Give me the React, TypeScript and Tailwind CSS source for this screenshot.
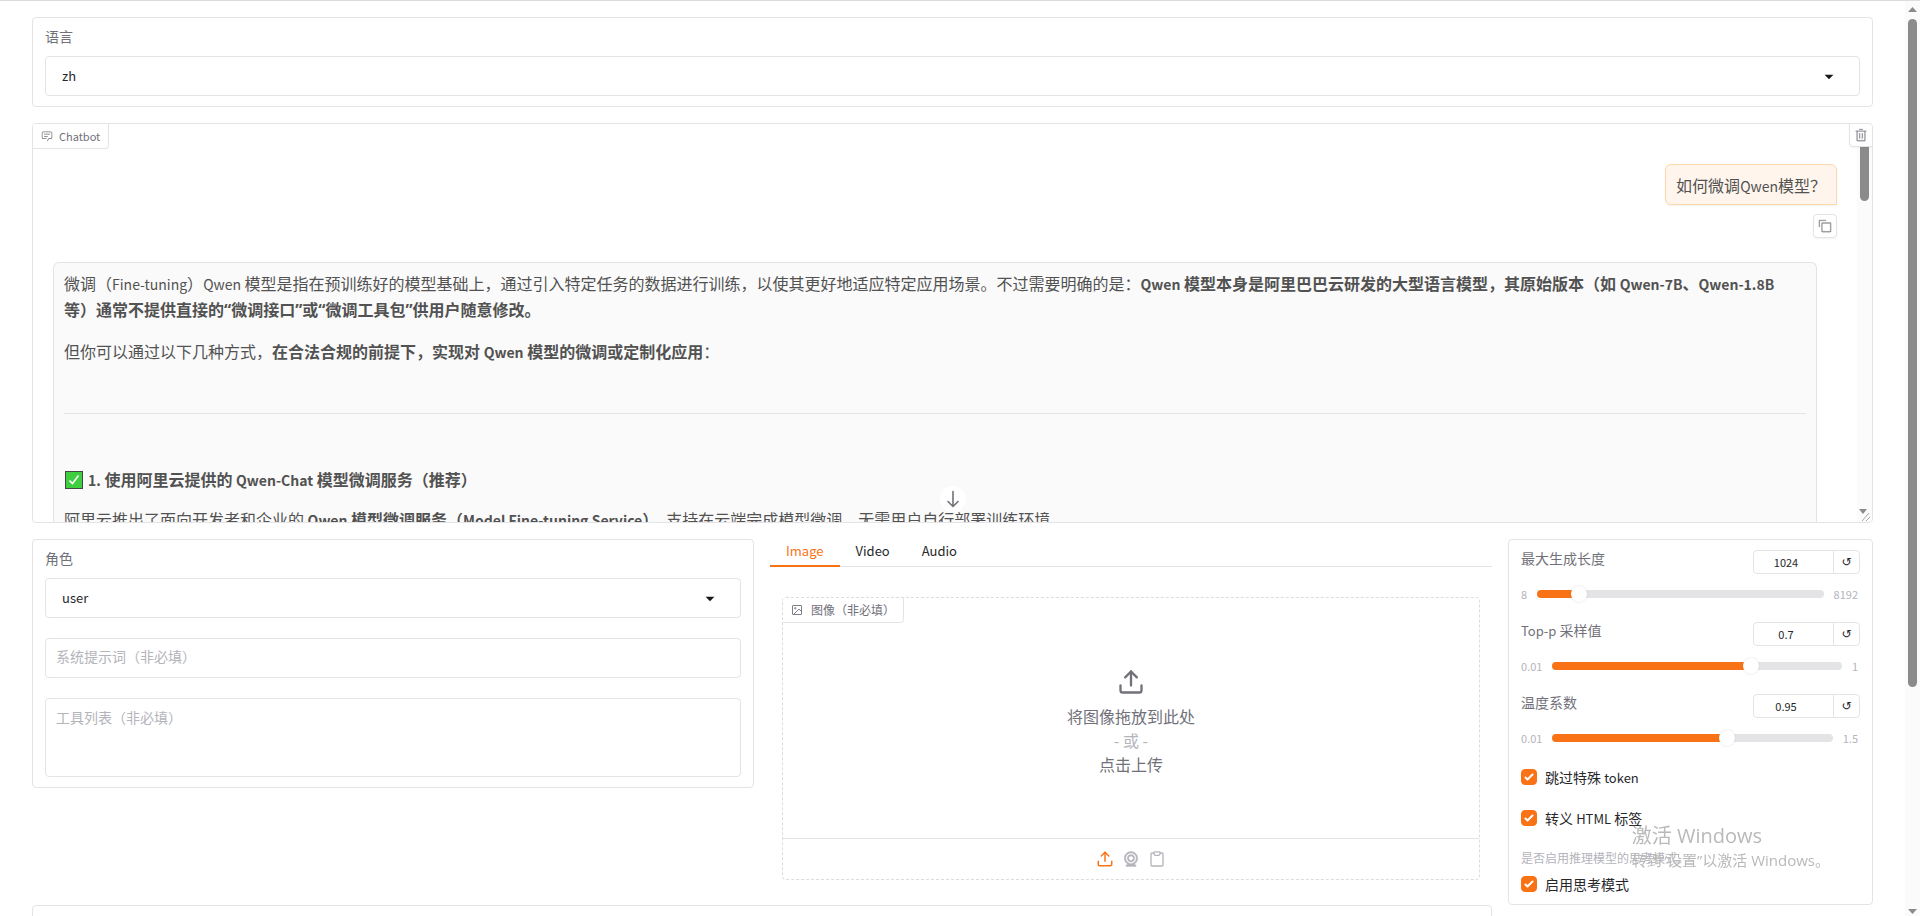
import { useState, type ReactNode } from 'react';

function ChatIcon() {
  return (
    <svg viewBox="0 0 32 32" className="size-3 fill-current" aria-hidden="true">
      <path d="M17.74 30L16 29l4-7h6a2 2 0 0 0 2-2V8a2 2 0 0 0-2-2H6a2 2 0 0 0-2 2v12a2 2 0 0 0 2 2h9v2H6a4 4 0 0 1-4-4V8a4 4 0 0 1 4-4h20a4 4 0 0 1 4 4v12a4 4 0 0 1-4 4h-4.84Z" />
      <path d="M8 10h16v2H8zm0 6h10v2H8z" />
    </svg>
  );
}

function TrashIcon() {
  return (
    <svg viewBox="0 0 32 32" className="size-[14px] fill-current stroke-current" strokeWidth="0.6" aria-hidden="true">
      <path d="M12 12H14V24H12zM18 12H20V24H18z" />
      <path d="M4 6V8H6V28a2 2 0 0 0 2 2H24a2 2 0 0 0 2-2V8h2V6zM8 28V8H24V28zM12 2H20V4H12z" />
    </svg>
  );
}

function CopyIcon() {
  return (
    <svg viewBox="0 0 32 32" className="size-[14px] fill-current stroke-current" strokeWidth="0.6" aria-hidden="true">
      <path d="M28 10V28H10V10H28m0-2H10a2 2 0 0 0-2 2V28a2 2 0 0 0 2 2H28a2 2 0 0 0 2-2V10a2 2 0 0 0-2-2Z" />
      <path d="M4 18H2V4A2 2 0 0 1 4 2H18V4H4Z" />
    </svg>
  );
}

function ImageIcon() {
  return (
    <svg viewBox="0 0 24 24" className="size-3 fill-none stroke-current" strokeWidth="1.8" aria-hidden="true">
      <rect x="3" y="3" width="18" height="18" rx="1" />
      <circle cx="8.5" cy="8.5" r="1.5" />
      <polyline points="21 15 16 10 5 21" />
    </svg>
  );
}

function UploadIcon({ className }: { className: string }) {
  return (
    <svg viewBox="0 0 24 24" className={className} fill="none" stroke="currentColor" strokeWidth="2" strokeLinecap="round" strokeLinejoin="round" aria-hidden="true">
      <path d="M21 15v4a2 2 0 0 1-2 2H5a2 2 0 0 1-2-2v-4" />
      <polyline points="17 8 12 3 7 8" />
      <line x1="12" y1="3" x2="12" y2="15" />
    </svg>
  );
}

function WebcamIcon() {
  return (
    <svg viewBox="0 0 24 24" className="size-[18px] fill-current stroke-current" strokeWidth="0.5" aria-hidden="true">
      <path d="M12 2c-4.963 0-9 4.038-9 9c0 3.328 1.82 6.232 4.513 7.79l-2.067 1.378A1 1 0 0 0 6 22h12a1 1 0 0 0 .555-1.832l-2.067-1.378C19.18 17.232 21 14.328 21 11c0-4.962-4.037-9-9-9zm0 16c-3.859 0-7-3.141-7-7c0-3.86 3.141-7 7-7s7 3.14 7 7c0 3.859-3.141 7-7 7z" />
      <path d="M12 6c-2.757 0-5 2.243-5 5s2.243 5 5 5s5-2.243 5-5s-2.243-5-5-5zm0 8c-1.654 0-3-1.346-3-3s1.346-3 3-3s3 1.346 3 3s-1.346 3-3 3z" />
    </svg>
  );
}

function ClipboardIcon() {
  return (
    <svg viewBox="0 0 18 18" className="size-[18px] fill-none stroke-current" strokeWidth="1.3" aria-hidden="true">
      <path d="M6 3H4a1 1 0 0 0-1 1v11a1 1 0 0 0 1 1h10a1 1 0 0 0 1-1V4a1 1 0 0 0-1-1h-2" />
      <path d="M6 2.600a.8.8 0 0 1 .8-.8h4.400a.8.8 0 0 1 .8.8v1.200a1.500 1.500 0 0 1-1.500 1.500h-3A1.500 1.500 0 0 1 6 3.800z" />
    </svg>
  );
}

// latin letters run one size smaller than the chinese text around them
function En({ children }: { children: ReactNode }) {
  return <span className="text-[14px]">{children}</span>;
}

function EnSmall({ children }: { children: ReactNode }) {
  return <span className="text-[13px]">{children}</span>;
}

// narrow curly quotes, the CJK face would make them full width
function Quote({ children }: { children: ReactNode }) {
  return (
    <>
      <span className="font-['Open_Sans',sans-serif]">“</span>
      {children}
      <span className="font-['Open_Sans',sans-serif]">”</span>
    </>
  );
}

function Dropdown({ id, label, options }: { id: string; label: string; options: string[] }) {
  return (
    <div>
      <label htmlFor={id} className="block text-sm leading-5 text-[#71717a]">
        {label}
      </label>
      <div className="relative mt-[10px]">
        <select
          id={id}
          className="block h-10 w-full appearance-none rounded border border-[#e4e4e7] bg-white pl-4 pr-10 text-[13px] text-[#27272a]"
        >
          {options.map((o) => (
            <option key={o}>{o}</option>
          ))}
        </select>
        <svg viewBox="0 0 18 18" className="pointer-events-none absolute right-[21px] top-[11px] size-5 fill-[#18181b]" aria-hidden="true">
          <path d="M5 7l4 4 4-4z" />
        </svg>
      </div>
    </div>
  );
}

type SliderProps = {
  id: string;
  label: ReactNode;
  min: number;
  max: number;
  step: number;
  initial: number;
};

function Slider({ id, label, min, max, step, initial }: SliderProps) {
  const [value, setValue] = useState(initial);
  const percent = ((value - min) / (max - min)) * 100;

  return (
    <div>
      <div className="flex justify-between">
        <label htmlFor={id} className="text-sm leading-4 text-[#71717a]">
          {label}
        </label>
        <div className="flex h-6 w-[107px] rounded border border-[#e4e4e7]">
          <input
            type="number"
            aria-label={`${id} value`}
            value={value}
            min={min}
            max={max}
            step={step}
            onChange={(e) => setValue(Number(e.target.value))}
            className="w-[80px] border-r border-[#e4e4e7] px-2 text-center text-[11px] text-[#27272a]"
          />
          <button
            type="button"
            aria-label="reset"
            onClick={() => setValue(initial)}
            className="flex flex-1 items-center justify-center font-['DejaVu_Sans',sans-serif] text-xs text-[#27272a]"
          >
            ↺
          </button>
        </div>
      </div>
      <div className="mt-3 flex h-4 items-center gap-[10px] text-[11px] text-[#b4b4bb]">
        <span>{min}</span>
        <input
          id={id}
          type="range"
          min={min}
          max={max}
          step={step}
          value={value}
          onChange={(e) => setValue(Number(e.target.value))}
          style={{ backgroundSize: `${percent}% 100%` }}
          className="h-2 min-w-0 flex-1 appearance-none rounded-full bg-[#e4e4e7] bg-[linear-gradient(#f97316,#f97316)] bg-no-repeat [&::-webkit-slider-thumb]:size-4 [&::-webkit-slider-thumb]:appearance-none [&::-webkit-slider-thumb]:rounded-full [&::-webkit-slider-thumb]:bg-white [&::-webkit-slider-thumb]:shadow-[0_0_2px_rgba(0,0,0,0.15)]"
        />
        <span className="pr-[2px]">{max}</span>
      </div>
    </div>
  );
}

function Check({ id, children }: { id: string; children: ReactNode }) {
  const [checked, setChecked] = useState(true);
  return (
    <div className="flex h-5 items-center gap-2">
      <span className="relative flex size-4">
        <input
          id={id}
          type="checkbox"
          checked={checked}
          onChange={(e) => setChecked(e.target.checked)}
          className="peer size-4 appearance-none rounded border border-[#e4e4e7] bg-white checked:border-[#f97316] checked:bg-[#f97316]"
        />
        <svg viewBox="0 0 16 16" className="pointer-events-none absolute inset-0 hidden size-4 fill-white peer-checked:block" aria-hidden="true">
          <path d="M12.207 4.793a1 1 0 010 1.414l-5 5a1 1 0 01-1.414 0l-2-2a1 1 0 011.414-1.414L6.5 9.086l4.293-4.293a1 1 0 011.414 0z" />
        </svg>
      </span>
      <label htmlFor={id} className="text-sm leading-5 text-[#27272a]">
        {children}
      </label>
    </div>
  );
}

function ChatPanel() {
  return (
    <section className="relative h-[400px] shrink-0 overflow-hidden rounded border border-[#e4e4e7]">
      <div className="absolute left-0 top-0 flex h-[25px] items-center gap-[6px] rounded-br border-b border-r border-[#e4e4e7] bg-white px-2 text-[11px] text-[#71717a]">
        <ChatIcon />
        Chatbot
      </div>
      <button type="button" aria-label="清空" className="absolute -right-px -top-px z-10 flex size-6 items-center justify-center rounded-bl rounded-tr border border-[#e4e4e7] bg-white text-[#8a8a92] shadow-xs">
        <TrashIcon />
      </button>

      <div className="flex flex-col pl-5 pr-[35px] pt-10">
        <div className="self-end rounded-md rounded-br-none border border-[#fed7aa] bg-[#fff5ec] px-[10px] pb-[6px] pt-2 text-base text-[#525252] shadow-xs">
          <p className="leading-6">
            如何微调<En>Qwen</En>模型？
          </p>
        </div>
        <button type="button" aria-label="复制" className="mt-[9px] flex size-6 items-center justify-center self-end rounded border border-[#e4e4e7] bg-white text-[#8a8a92] shadow-xs">
          <CopyIcon />
        </button>

        <div className="mr-5 mt-6 rounded-t-md border border-b-0 border-[#e4e4e7] bg-[#fafafa] px-[10px] pt-2 text-base leading-[25px] text-[#525252]">
          <p className="pr-4">
            微调（<En>Fine-tuning</En>）<En>Qwen</En> 模型是指在预训练好的模型基础上，通过引入特定任务的数据进行训练，以使其更好地适应特定应用场景。不过需要明确的是：
            <strong>
              <En>Qwen</En> 模型本身是阿里巴巴云研发的大型语言模型，其原始版本（如 <En>Qwen-7B</En>、<En>Qwen-1.8B</En> 等）通常不提供直接的<Quote>微调接口</Quote>或<Quote>微调工具包</Quote>供用户随意修改。
            </strong>
          </p>
          <p className="mt-4">
            但你可以通过以下几种方式，
            <strong>
              在合法合规的前提下，实现对 <En>Qwen</En> 模型的微调或定制化应用
            </strong>
            ：
          </p>
          <hr className="my-12 border-[#e4e4e7]" />
          <h3 className="flex items-center gap-1 pt-[5px] font-bold">
            <svg viewBox="0 0 20 20" className="size-5" role="img" aria-label="完成">
              <rect x="1.5" y="1.5" width="17" height="17" fill="#3fce3f" stroke="#454545" />
              <path d="M5.5 10.5l3 3 6-8" fill="none" stroke="#fff" strokeWidth="1.6" />
            </svg>
            <span>
              <En>1.</En> 使用阿里云提供的 <En>Qwen-Chat</En> 模型微调服务（推荐）
            </span>
          </h3>
          <p className="mt-[14px]">
            阿里云推出了面向开发者和企业的{' '}
            <strong>
              <En>Qwen</En> 模型微调服务（<En>Model Fine-tuning Service</En>）
            </strong>
            ，支持在云端完成模型微调，无需用户自行部署训练环境。
          </p>
        </div>
      </div>

      <button type="button" aria-label="滚动到底部" className="absolute bottom-[10px] left-1/2 flex size-[26px] -translate-x-1/2 items-center justify-center rounded-full bg-white text-[#71717a]">
        <svg viewBox="0 0 16 20" className="h-5 w-4 fill-none stroke-current" strokeWidth="1.6" strokeLinecap="round" strokeLinejoin="round" aria-hidden="true">
          <path d="M8 2.500V17.500M3 12.500l5 5 5-5" />
        </svg>
      </button>

      <div className="absolute bottom-0 right-0 top-0 w-[15px] bg-[#fbfbfb]" aria-hidden="true">
        <div className="ml-[3px] mt-[15px] h-[62px] w-[9px] rounded-full bg-[#8b8b8b]" />
        <svg viewBox="0 0 15 15" className="absolute bottom-0 right-0 size-[15px]">
          <path d="M2 2h8L6 7z" fill="#8b8b8b" />
          <path d="M5 14L12 6M9 14l4-4" stroke="#a8a8a8" fill="none" />
        </svg>
      </div>
    </section>
  );
}

function ImageUpload() {
  return (
    <div className="relative flex h-[283px] flex-col rounded border border-dashed border-[#dcdce0]">
      <div className="absolute left-0 top-0 flex h-[25px] items-center gap-2 rounded-br border-b border-r border-[#e4e4e7] bg-white px-2 text-xs text-[#71717a]">
        <ImageIcon />
        图像（非必填）
      </div>
      <button type="button" className="flex flex-1 flex-col items-center justify-center pt-2 text-base leading-6 text-[#71717a]">
        <UploadIcon className="mb-2 size-7" />
        <span>将图像拖放到此处</span>
        <span className="text-[#b4b4bb]">- 或 -</span>
        <span>点击上传</span>
      </button>
      <div className="flex h-[41px] items-center justify-center gap-2 border-t border-[#e4e4e7] text-[#b4b4bb]">
        <button type="button" aria-label="上传" className="text-[#f97316]">
          <UploadIcon className="size-[18px]" />
        </button>
        <button type="button" aria-label="摄像头">
          <WebcamIcon />
        </button>
        <button type="button" aria-label="剪贴板">
          <ClipboardIcon />
        </button>
      </div>
    </div>
  );
}

const tabs = ['Image', 'Video', 'Audio'];

export default function App() {
  const [tab, setTab] = useState('Image');

  return (
    <div className="flex h-screen overflow-hidden border-t border-[#dcdcdc] bg-white font-['Noto_Sans_CJK_SC',sans-serif] text-[#27272a]">
      <main className="flex min-w-0 flex-1 flex-col gap-4 px-8 pt-4">
        <section className="rounded border border-[#e4e4e7] px-3 pb-[10px] pt-2">
          <Dropdown id="lang" label="语言" options={['zh', 'en', 'ru', 'ko', 'ja']} />
        </section>

        <ChatPanel />

        <div className="grid grid-cols-[minmax(0,4fr)_minmax(0,1fr)] items-start gap-4">
          <div className="flex flex-col gap-4">
            <div className="grid grid-cols-2 items-start gap-4">
              <section className="flex flex-col gap-5 rounded border border-[#e4e4e7] px-3 pb-[10px] pt-2">
                <Dropdown id="role" label="角色" options={['user', 'observation']} />
                <input
                  type="text"
                  aria-label="系统提示词"
                  placeholder="系统提示词（非必填）"
                  className="h-10 rounded border border-[#e4e4e7] px-[10px] pb-1 text-sm placeholder:text-[#b4b4bb]"
                />
                <textarea
                  aria-label="工具列表"
                  placeholder="工具列表（非必填）"
                  className="h-[79px] resize-none rounded border border-[#e4e4e7] px-[10px] py-2 text-sm leading-5 placeholder:text-[#b4b4bb]"
                />
              </section>

              <section>
                <div role="tablist" className="flex h-7 border-b border-[#e4e4e7]">
                  {tabs.map((t) => (
                    <button
                      key={t}
                      type="button"
                      role="tab"
                      aria-selected={tab === t}
                      onClick={() => setTab(t)}
                      className={
                        tab === t
                          ? '-mb-px border-b-2 border-[#f97316] px-4 pb-[3px] text-[13px] leading-5 text-[#f97316]'
                          : '-mb-px px-4 pb-[5px] text-[13px] leading-5 text-[#27272a]'
                      }
                    >
                      {t}
                    </button>
                  ))}
                </div>
                <div className="px-3 pb-[9px] pt-[30px]">
                  <ImageUpload />
                </div>
              </section>
            </div>

            <section className="h-40 rounded border border-[#e4e4e7]" />
          </div>

          <section className="flex flex-col rounded border border-[#e4e4e7] px-3 pb-[10px] pt-[10px]">
            <div className="flex flex-col gap-5">
              <Slider id="max-length" label="最大生成长度" min={8} max={8192} step={1} initial={1024} />
              <Slider
                id="top-p"
                label={
                  <>
                    <EnSmall>Top-p</EnSmall> 采样值
                  </>
                }
                min={0.01}
                max={1}
                step={0.01}
                initial={0.7}
              />
              <Slider id="temperature" label="温度系数" min={0.01} max={1.5} step={0.01} initial={0.95} />
            </div>
            <div className="mt-[21px] flex flex-col gap-[21px]">
              <Check id="skip-token">
                跳过特殊 <EnSmall>token</EnSmall>
              </Check>
              <Check id="escape-html">
                转义 <EnSmall>HTML</EnSmall> 标签
              </Check>
            </div>
            <p className="mb-2 mt-[22px] text-xs leading-4 text-[#b4b4bb]">是否启用推理模型的思考模式。</p>
            <Check id="thinking">启用思考模式</Check>
          </section>
        </div>
      </main>

      <div className="flex w-[15px] shrink-0 flex-col items-center bg-[#fbfbfb]" aria-hidden="true">
        <svg viewBox="0 0 9 5" className="mb-[7px] mt-[6px] h-[5px] w-[9px] shrink-0 fill-[#8b8b8b]">
          <path d="M0 5h9L4.500 0z" />
        </svg>
        <div className="h-[73%] w-[9px] rounded-full bg-[#8b8b8b]" />
        <svg viewBox="0 0 9 5" className="mb-[2px] mt-auto h-[5px] w-[9px] shrink-0 fill-[#8b8b8b]">
          <path d="M0 0h9L4.500 5z" />
        </svg>
      </div>

      {/* desktop activation notice */}
      <div className="pointer-events-none fixed bottom-[46px] right-[90px] font-['Open_Sans','Noto_Sans_CJK_SC',sans-serif] text-[#b9b9b9]">
        <p className="text-xl leading-7">激活 Windows</p>
        <p className="text-[15px] leading-5">转到“设置”以激活 Windows。</p>
      </div>
    </div>
  );
}
